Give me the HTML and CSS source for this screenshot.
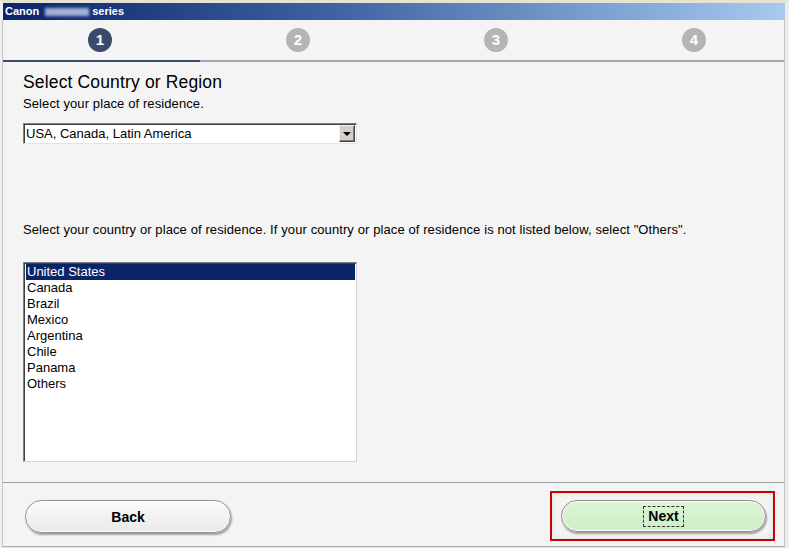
FILE: index.html
```html
<!DOCTYPE html>
<html>
<head>
<meta charset="utf-8">
<link rel="stylesheet" href="styles.css">
</head>
<body>
<div class="window">
  <div class="titlebar">
    <span>Canon</span><span class="blur"></span><span>series</span>
  </div>
  <div class="steps">
    <div class="step"><span class="num active">1</span></div>
    <div class="step"><span class="num">2</span></div>
    <div class="step"><span class="num">3</span></div>
    <div class="step"><span class="num">4</span></div>
  </div>
  <div class="progress"><div class="done"></div></div>
  <div class="content">
    <h1 class="heading">Select Country or Region</h1>
    <p class="label">Select your place of residence.</p>
    <div class="combo">
      <span class="combo-text">USA, Canada, Latin America</span>
      <span class="combo-btn"><span class="arrow"></span></span>
    </div>
    <p class="label long">Select your country or place of residence. If your country or place of residence is not listed below, select "Others".</p>
    <ul class="listbox">
      <li class="selected">United States</li>
      <li>Canada</li>
      <li>Brazil</li>
      <li>Mexico</li>
      <li>Argentina</li>
      <li>Chile</li>
      <li>Panama</li>
      <li>Others</li>
    </ul>
  </div>
  <div class="footer">
    <button class="pill back">Back</button>
    <div class="highlight">
      <button class="pill next"><span class="focus">Next</span></button>
    </div>
  </div>
</div>
</body>
</html>
```

FILE: styles.css
```css
* { box-sizing: border-box; }
html, body { margin: 0; padding: 0; }
body {
  width: 789px;
  height: 548px;
  overflow: hidden;
  background: #f4f4f4;
  font-family: "Liberation Sans", Arial, sans-serif;
  color: #000;
}
.window {
  width: 789px;
  height: 548px;
  border-style: solid;
  border-width: 3px 4px 1px 2px;
  border-color: #e7e3d2 #ececec #e2e2e2 #efefef;
  background: #f4f4f4;
  display: flex;
  flex-direction: column;
  position: relative;
  overflow: hidden;
}
.window::after {
  content: "";
  position: absolute;
  inset: 17px 0 0 0;
  border-left: 1px solid #c4c4c4;
  border-right: 1px solid #c4c4c4;
  border-bottom: 1px solid #b0b0b0;
  pointer-events: none;
}
.titlebar {
  height: 17px;
  margin-left: 1px;
  background: linear-gradient(to right, #0a246a 0%, #3b5f9f 40%, #a6caf0 100%);
  color: #fff;
  font-weight: bold;
  font-size: 11px;
  line-height: 17px;
  padding-left: 2px;
  display: flex;
  align-items: center;
  white-space: nowrap;
}
.blur {
  display: inline-block;
  width: 44px;
  height: 8px;
  margin: 0 3px 0 6px;
  background: #a3b1d8;
  filter: blur(1.5px);
}
.steps {
  height: 40px;
  display: grid;
  grid-template-columns: repeat(4, 198px);
  align-items: center;
  margin-left: -1px;
}
.step {
  display: flex;
  justify-content: center;
}
.num {
  width: 24px;
  height: 24px;
  border-radius: 50%;
  background: #b4b4b4;
  color: #fff;
  font-weight: bold;
  font-size: 15px;
  line-height: 24px;
  text-align: center;
}
.num.active { background: #394a6d; }
.progress {
  height: 2px;
  margin: 0 1px;
  background: #a9a9a9;
}
.done {
  width: 197px;
  height: 2px;
  background: #3b4a6e;
}
.content {
  padding: 10px 0 0 21px;
  height: 420px;
}
.heading {
  margin: 0;
  font-weight: normal;
  font-size: 17.5px;
  letter-spacing: 0.15px;
  line-height: 20px;
}
.label {
  margin: 4px 0 0 0;
  font-size: 13px;
  letter-spacing: 0.1px;
  line-height: 16px;
}
.combo {
  margin-top: 11px;
  width: 334px;
  height: 21px;
  background: #fff;
  border-top: 1px solid #808080;
  border-left: 1px solid #808080;
  border-right: 1px solid #e4e4e4;
  border-bottom: 1px solid #e4e4e4;
  box-shadow: inset 1px 1px 0 #404040;
  display: flex;
  align-items: center;
  justify-content: space-between;
  padding: 1px 1px 1px 2px;
}
.combo-text {
  font-size: 13px;
  line-height: 16px;
}
.combo-btn {
  width: 16px;
  height: 17px;
  background: #d4d0c8;
  border-top: 1px solid #f0f0f0;
  border-left: 1px solid #f0f0f0;
  border-right: 1px solid #404040;
  border-bottom: 1px solid #404040;
  box-shadow: inset -1px -1px 0 #808080;
  display: flex;
  align-items: center;
  justify-content: center;
}
.arrow {
  width: 0;
  height: 0;
  border-left: 4px solid transparent;
  border-right: 4px solid transparent;
  border-top: 4px solid #000;
  margin-top: 1px;
}
.label.long { margin-top: 78px; }
.listbox {
  list-style: none;
  margin: 24px 0 0 0;
  padding: 1px 1px 0 2px;
  width: 334px;
  height: 200px;
  background: #fff;
  border-top: 1px solid #808080;
  border-left: 1px solid #808080;
  border-right: 1px solid #d8d4cc;
  border-bottom: 1px solid #d8d4cc;
  box-shadow: inset 1px 1px 0 #404040;
  font-size: 13px;
}
.listbox li {
  height: 16px;
  line-height: 16px;
  padding-left: 1px;
}
.listbox li.selected {
  background: #0a246a;
  color: #fff;
}
.footer {
  border-top: 1px solid #a0a0a0;
  margin: 0 1px;
  flex: 1;
  display: flex;
  align-items: flex-start;
  justify-content: space-between;
  padding: 8px 9px 0 22px;
}
.pill {
  width: 206px;
  height: 33px;
  border-radius: 17px;
  border: 1px solid #8e8e8e;
  background: linear-gradient(#fbfbfb, #e9e9e9);
  box-shadow: inset 0 0 0 1px #ffffff, 1px 2px 2px rgba(0,0,0,0.35);
  font-family: "Liberation Sans", Arial, sans-serif;
  font-weight: bold;
  font-size: 14px;
  color: #000;
  padding: 0;
}
.back { margin-top: 9px; }
.highlight {
  border: 2px solid #cc0000;
  padding: 7px 7px 7px 9px;
  width: 225px;
  height: 50px;
  box-shadow: inset 0 0 6px rgba(0,0,0,0.08);
}
.next {
  width: 205px;
  height: 32px;
  background: linear-gradient(#dcf5d6, #cfefc7);
}
.focus {
  display: inline-block;
  border: 1px dashed #333;
  padding: 1px 4px;
  line-height: 17px;
}
```
